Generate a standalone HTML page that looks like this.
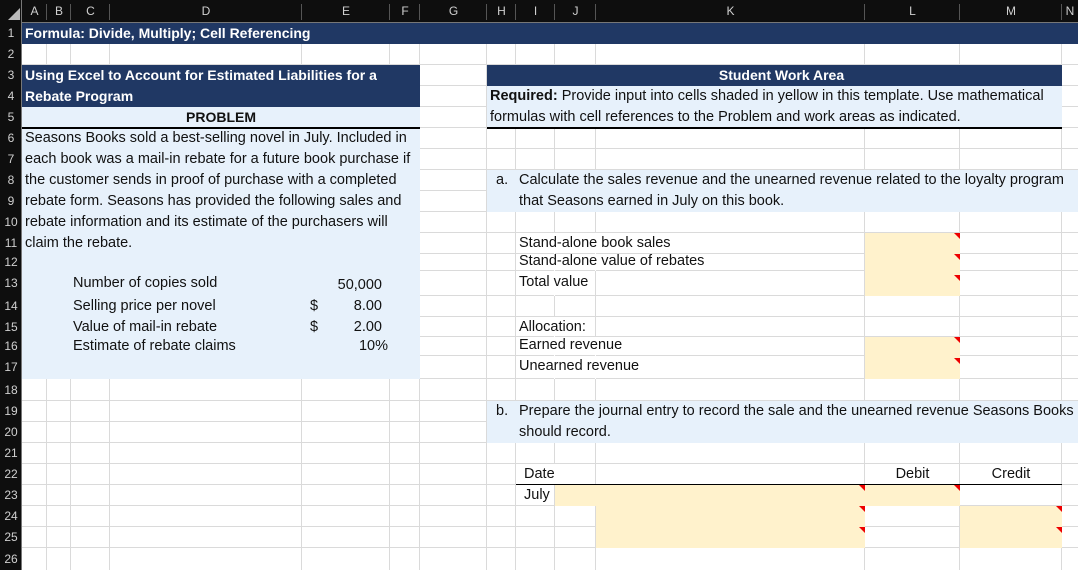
<!DOCTYPE html>
<html><head><meta charset="utf-8"><style>
*{margin:0;padding:0;box-sizing:border-box}
body{width:1078px;height:570px;overflow:hidden;background:#fff;position:relative;font-family:"Liberation Sans",Arial,sans-serif;font-size:14.5px;color:#111}
div{position:absolute}
.v{top:23px;width:1px;height:547px;background:#dadada}
.h{left:22px;height:1px;width:1056px;background:#dadada}
.t{white-space:nowrap;line-height:21px}
.b{font-weight:bold;font-size:14px}
.w{color:#fff;font-weight:bold;font-size:14px}
.hd{top:0;height:23px;line-height:23px;color:#d0d0d0;text-align:center;font-size:12px}
.rn{left:0;width:22px;color:#d0d0d0;font-size:12px;text-align:center}
.y{background:#fff2cc}
.lb{background:#e7f1fb}
.nv{background:#203864}
.tri{width:0;height:0;border-top:6px solid #e00;border-left:6px solid transparent}
.wv{width:1px;background:#fff}
</style></head><body>
<div class="v" style="left:46px"></div><div class="v" style="left:70px"></div><div class="v" style="left:109px"></div><div class="v" style="left:301px"></div><div class="v" style="left:389px"></div><div class="v" style="left:419px"></div><div class="v" style="left:486px"></div><div class="v" style="left:515px"></div><div class="v" style="left:554px"></div><div class="v" style="left:595px"></div><div class="v" style="left:864px"></div><div class="v" style="left:959px"></div><div class="v" style="left:1061px"></div>
<div class="h" style="top:43px"></div><div class="h" style="top:64px"></div><div class="h" style="top:85px"></div><div class="h" style="top:106px"></div><div class="h" style="top:127px"></div><div class="h" style="top:148px"></div><div class="h" style="top:169px"></div><div class="h" style="top:190px"></div><div class="h" style="top:211px"></div><div class="h" style="top:232px"></div><div class="h" style="top:253px"></div><div class="h" style="top:270px"></div><div class="h" style="top:295px"></div><div class="h" style="top:316px"></div><div class="h" style="top:336px"></div><div class="h" style="top:355px"></div><div class="h" style="top:378px"></div><div class="h" style="top:400px"></div><div class="h" style="top:421px"></div><div class="h" style="top:442px"></div><div class="h" style="top:463px"></div><div class="h" style="top:484px"></div><div class="h" style="top:505px"></div><div class="h" style="top:526px"></div><div class="h" style="top:547px"></div>
<!-- hide gridlines under overflowing text -->
<div class="wv" style="left:554px;top:233px;height:63px"></div>
<div class="wv" style="left:554px;top:317px;height:62px"></div>
<div class="wv" style="left:595px;top:233px;height:38px"></div>
<div class="wv" style="left:595px;top:337px;height:42px"></div>
<div class="wv" style="left:554px;top:464px;height:21px"></div>
<div class="nv" style="left:22px;top:23px;width:1056px;height:21px"></div>
<div class="nv" style="left:22px;top:65px;width:398px;height:42px"></div>
<div class="nv" style="left:487px;top:65px;width:575px;height:21px"></div>
<div class="lb" style="left:22px;top:107px;width:398px;height:272px"></div>
<div style="left:22px;top:127px;width:398px;height:2px;background:#000"></div>
<div class="lb" style="left:487px;top:86px;width:575px;height:42px"></div>
<div style="left:487px;top:127px;width:575px;height:2px;background:#000"></div>
<div class="lb" style="left:487px;top:170px;width:591px;height:42px"></div>
<div class="lb" style="left:487px;top:401px;width:591px;height:42px"></div>
<div class="y" style="left:865px;top:233px;width:95px;height:63px"></div>
<div class="y" style="left:865px;top:337px;width:95px;height:42px"></div>
<div style="left:516px;top:484px;width:546px;height:1px;background:#000"></div>
<div class="y" style="left:555px;top:485px;width:405px;height:21px"></div>
<div class="y" style="left:596px;top:506px;width:269px;height:42px"></div>
<div class="y" style="left:960px;top:506px;width:102px;height:42px"></div>
<div class="tri" style="left:954px;top:233px"></div><div class="tri" style="left:954px;top:254px"></div><div class="tri" style="left:954px;top:275px"></div>
<div class="tri" style="left:954px;top:337px"></div><div class="tri" style="left:954px;top:358px"></div>
<div class="tri" style="left:859px;top:485px"></div><div class="tri" style="left:954px;top:485px"></div>
<div class="tri" style="left:859px;top:506px"></div><div class="tri" style="left:859px;top:527px"></div>
<div class="tri" style="left:1056px;top:506px"></div><div class="tri" style="left:1056px;top:527px"></div>
<div style="left:0;top:0;width:1078px;height:23px;background:#0e0e0e;border-bottom:1px solid #777"></div>
<div style="left:0;top:0;width:22px;height:570px;background:#0e0e0e;border-right:1px solid #777"></div>
<div style="left:8px;top:8px;width:0;height:0;border-left:12px solid transparent;border-bottom:12px solid #bbb"></div>
<div class="hd" style="left:22px;width:25px">A</div><div class="hd" style="left:47px;width:24px">B</div><div class="hd" style="left:71px;width:39px">C</div><div class="hd" style="left:110px;width:192px">D</div><div class="hd" style="left:302px;width:88px">E</div><div class="hd" style="left:390px;width:30px">F</div><div class="hd" style="left:420px;width:67px">G</div><div class="hd" style="left:487px;width:29px">H</div><div class="hd" style="left:516px;width:39px">I</div><div class="hd" style="left:555px;width:41px">J</div><div class="hd" style="left:596px;width:269px">K</div><div class="hd" style="left:865px;width:95px">L</div><div class="hd" style="left:960px;width:102px">M</div><div class="hd" style="left:1062px;width:16px">N</div>
<div style="left:46px;top:4px;width:1px;height:16px;background:#555"></div><div style="left:70px;top:4px;width:1px;height:16px;background:#555"></div><div style="left:109px;top:4px;width:1px;height:16px;background:#555"></div><div style="left:301px;top:4px;width:1px;height:16px;background:#555"></div><div style="left:389px;top:4px;width:1px;height:16px;background:#555"></div><div style="left:419px;top:4px;width:1px;height:16px;background:#555"></div><div style="left:486px;top:4px;width:1px;height:16px;background:#555"></div><div style="left:515px;top:4px;width:1px;height:16px;background:#555"></div><div style="left:554px;top:4px;width:1px;height:16px;background:#555"></div><div style="left:595px;top:4px;width:1px;height:16px;background:#555"></div><div style="left:864px;top:4px;width:1px;height:16px;background:#555"></div><div style="left:959px;top:4px;width:1px;height:16px;background:#555"></div><div style="left:1061px;top:4px;width:1px;height:16px;background:#555"></div>
<div class="rn" style="top:23px;height:21px;line-height:21px">1</div><div class="rn" style="top:44px;height:21px;line-height:21px">2</div><div class="rn" style="top:65px;height:21px;line-height:21px">3</div><div class="rn" style="top:86px;height:21px;line-height:21px">4</div><div class="rn" style="top:107px;height:21px;line-height:21px">5</div><div class="rn" style="top:128px;height:21px;line-height:21px">6</div><div class="rn" style="top:149px;height:21px;line-height:21px">7</div><div class="rn" style="top:170px;height:21px;line-height:21px">8</div><div class="rn" style="top:191px;height:21px;line-height:21px">9</div><div class="rn" style="top:212px;height:21px;line-height:21px">10</div><div class="rn" style="top:233px;height:21px;line-height:21px">11</div><div class="rn" style="top:254px;height:17px;line-height:17px">12</div><div class="rn" style="top:271px;height:25px;line-height:25px">13</div><div class="rn" style="top:296px;height:21px;line-height:21px">14</div><div class="rn" style="top:317px;height:20px;line-height:20px">15</div><div class="rn" style="top:337px;height:19px;line-height:19px">16</div><div class="rn" style="top:356px;height:23px;line-height:23px">17</div><div class="rn" style="top:379px;height:22px;line-height:22px">18</div><div class="rn" style="top:401px;height:21px;line-height:21px">19</div><div class="rn" style="top:422px;height:21px;line-height:21px">20</div><div class="rn" style="top:443px;height:21px;line-height:21px">21</div><div class="rn" style="top:464px;height:21px;line-height:21px">22</div><div class="rn" style="top:485px;height:21px;line-height:21px">23</div><div class="rn" style="top:506px;height:21px;line-height:21px">24</div><div class="rn" style="top:527px;height:21px;line-height:21px">25</div><div class="rn" style="top:548px;height:22px;line-height:22px">26</div>
<div class="t w" style="left:25px;top:23px">Formula: Divide, Multiply; Cell Referencing</div>
<div class="t w" style="left:25px;top:65px">Using Excel to Account for Estimated Liabilities for a</div>
<div class="t w" style="left:25px;top:86px">Rebate Program</div>
<div class="t b" style="left:22px;top:107px;width:398px;text-align:center">PROBLEM</div>
<div class="t" style="left:25px;top:128px">Seasons Books sold a best-selling novel in July. Included in</div>
<div class="t" style="left:25px;top:149px">each book was a mail-in rebate for a future book purchase if</div>
<div class="t" style="left:25px;top:170px">the customer sends in proof of purchase with a completed</div>
<div class="t" style="left:25px;top:191px">rebate form. Seasons has provided the following sales and</div>
<div class="t" style="left:25px;top:212px">rebate information and its estimate of the purchasers will</div>
<div class="t" style="left:25px;top:233px">claim the rebate.</div>
<div class="t" style="left:73px;top:273px">Number of copies sold</div><div class="t" style="left:302px;top:275px;width:80px;text-align:right">50,000</div>
<div class="t" style="left:73px;top:296px">Selling price per novel</div><div class="t" style="left:310px;top:296px">$</div><div class="t" style="left:302px;top:296px;width:80px;text-align:right">8.00</div>
<div class="t" style="left:73px;top:317px">Value of mail-in rebate</div><div class="t" style="left:310px;top:317px">$</div><div class="t" style="left:302px;top:317px;width:80px;text-align:right">2.00</div>
<div class="t" style="left:73px;top:336px">Estimate of rebate claims</div><div class="t" style="left:302px;top:336px;width:86px;text-align:right">10%</div>
<div class="t w" style="left:487px;top:65px;width:589px;text-align:center">Student Work Area</div>
<div class="t" style="left:490px;top:86px"><b>Required:</b> Provide input into cells shaded in yellow in this template. Use mathematical</div>
<div class="t" style="left:490px;top:107px">formulas with cell references to the Problem and work areas as indicated.</div>
<div class="t" style="left:496px;top:170px">a.</div><div class="t" style="left:519px;top:170px">Calculate the sales revenue and the unearned revenue related to the loyalty program</div>
<div class="t" style="left:519px;top:191px">that Seasons earned in July on this book.</div>
<div class="t" style="left:519px;top:233px">Stand-alone book sales</div>
<div class="t" style="left:519px;top:251px">Stand-alone value of rebates</div>
<div class="t" style="left:519px;top:272px">Total value</div>
<div class="t" style="left:519px;top:317px">Allocation:</div>
<div class="t" style="left:519px;top:335px">Earned revenue</div>
<div class="t" style="left:519px;top:356px">Unearned revenue</div>
<div class="t" style="left:496px;top:401px">b.</div><div class="t" style="left:519px;top:401px">Prepare the journal entry to record the sale and the unearned revenue Seasons Books</div>
<div class="t" style="left:519px;top:422px">should record.</div>
<div class="t" style="left:524px;top:464px">Date</div>
<div class="t" style="left:865px;top:464px;width:95px;text-align:center">Debit</div>
<div class="t" style="left:960px;top:464px;width:102px;text-align:center">Credit</div>
<div class="t" style="left:524px;top:485px">July</div>
</body></html>
